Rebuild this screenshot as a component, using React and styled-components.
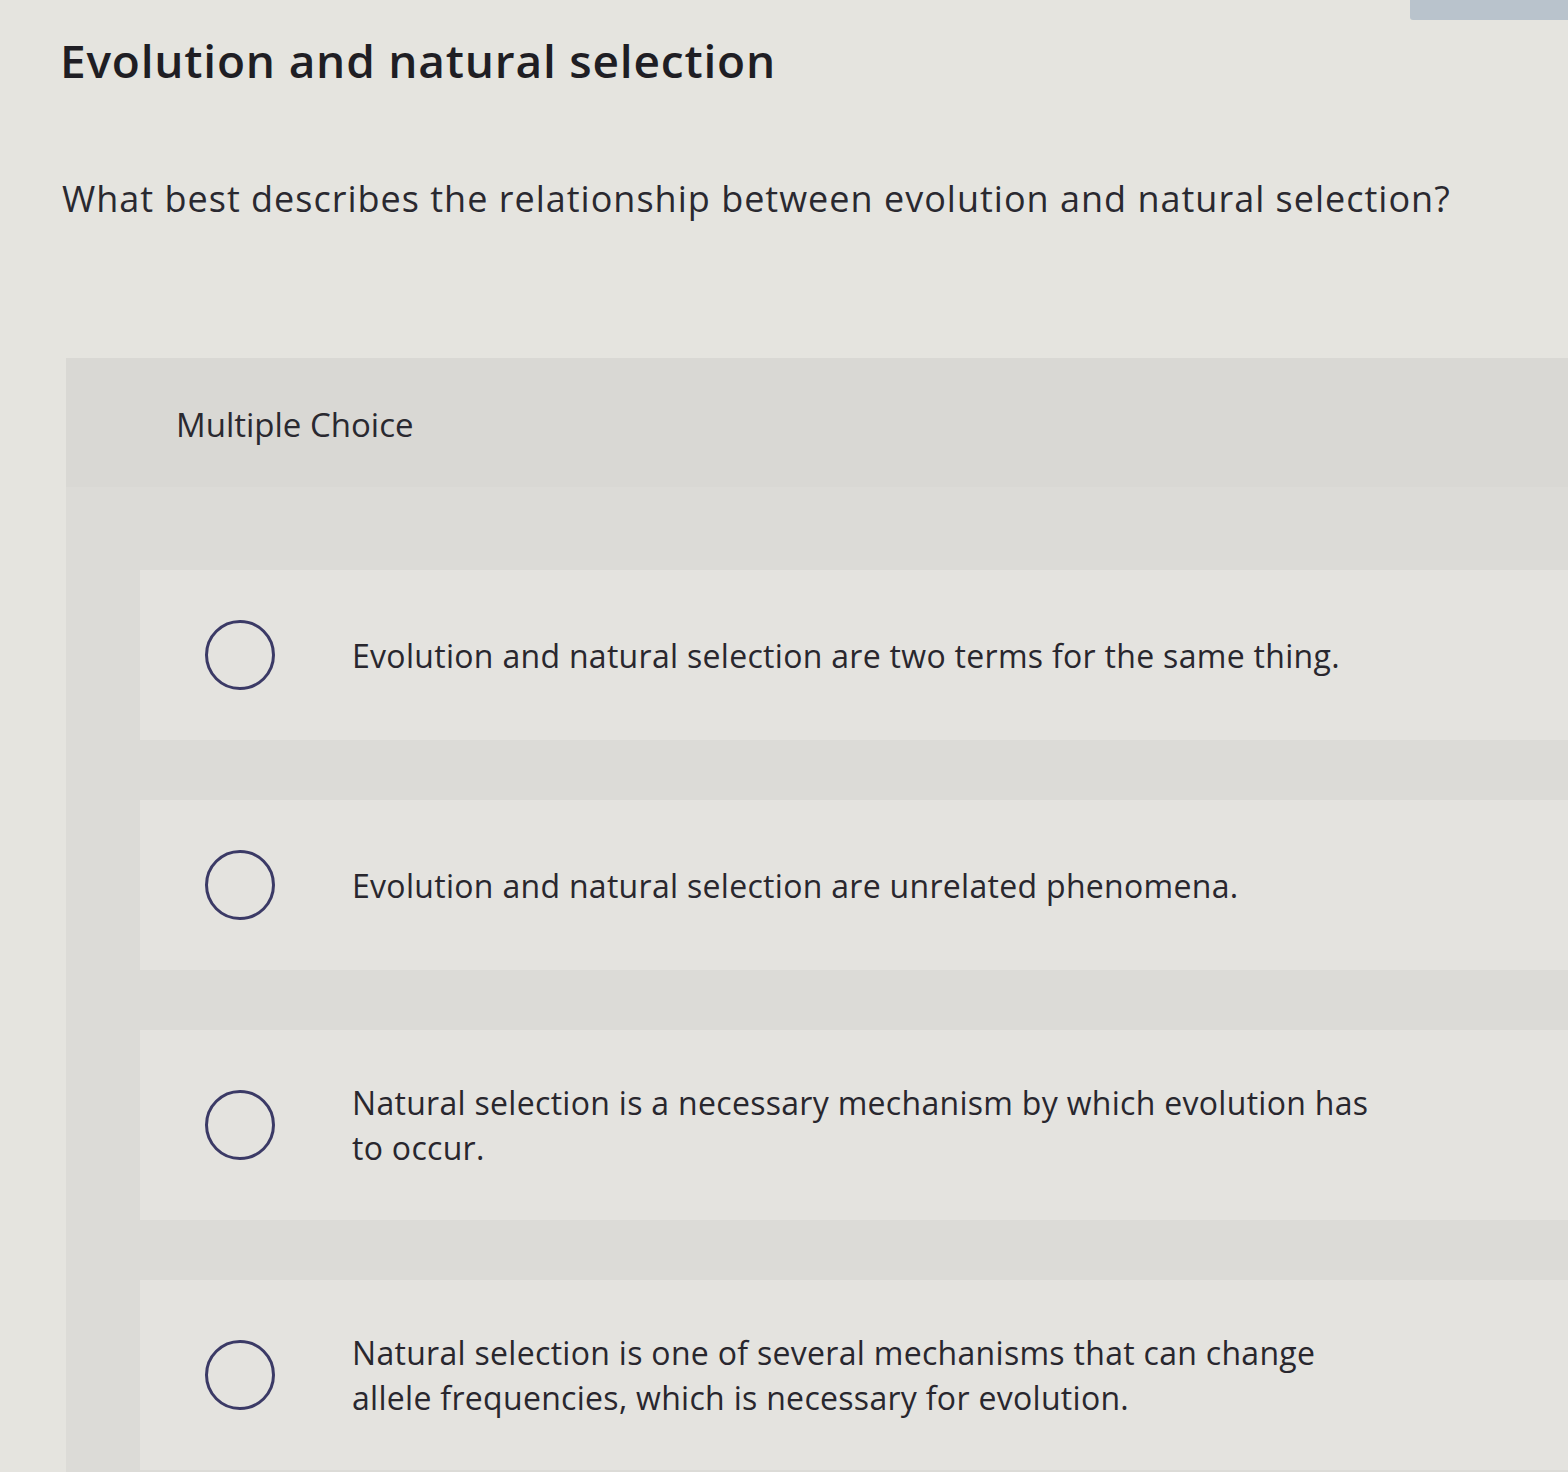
import React from "react";
import styled, { createGlobalStyle } from "styled-components";

const Global = createGlobalStyle`
  html, body { margin: 0; padding: 0; }
  body {
    background: #e5e4df;
    font-family: "Open Sans", Lato, Arial, sans-serif;
    color: #28272e;
    overflow-x: hidden;
  }
`;

const Page = styled.div`
  width: 1568px;
  min-height: 1472px;
  background: #e5e4df;
  overflow: hidden;
`;

const TopBar = styled.div`
  height: 20px;
  display: flex;
  justify-content: flex-end;
`;

const TopButton = styled.div`
  width: 158px;
  height: 20px;
  background: #b9c3cc;
  border-bottom-left-radius: 3px;
`;

const Title = styled.h1`
  margin: 13px 0 0 60px;
  font-size: 46px;
  line-height: 55px;
  font-weight: 600;
  letter-spacing: 0.8px;
  color: #1f1e24;
`;

const Question = styled.p`
  margin: 89px 0 0 62px;
  font-size: 36px;
  line-height: 43px;
  font-weight: 400;
  letter-spacing: 1px;
  color: #2a2930;
`;

const Panel = styled.section`
  margin: 138px 0 0 66px;
  background: #dedcd8;
`;

const PanelHeader = styled.div`
  padding: 46px 0 42px 110px;
  background: #d9d8d4;
  font-size: 33px;
  line-height: 41px;
  color: #2a2930;
`;

const OptionList = styled.div`
  display: flex;
  flex-direction: column;
  gap: 60px;
  padding: 83px 0 60px 74px;
  background: #dcdbd7;
`;

const OptionCard = styled.label`
  display: flex;
  align-items: center;
  min-height: 170px;
  box-sizing: border-box;
  padding: 50px 0 50px 65px;
  background: #e4e3df;
  cursor: pointer;
`;

const Radio = styled.span`
  flex: none;
  width: 70px;
  height: 70px;
  box-sizing: border-box;
  border: 3px solid #3b3a66;
  border-radius: 50%;
`;

const OptionText = styled.span`
  margin-left: 77px;
  max-width: 1030px;
  font-size: 32px;
  line-height: 45px;
  letter-spacing: 0.3px;
  color: #29272e;
`;

const options = [
  "Evolution and natural selection are two terms for the same thing.",
  "Evolution and natural selection are unrelated phenomena.",
  "Natural selection is a necessary mechanism by which evolution has to occur.",
  "Natural selection is one of several mechanisms that can change allele frequencies, which is necessary for evolution.",
];

export default function App() {
  return (
    <Page>
      <Global />
      <TopBar>
        <TopButton />
      </TopBar>
      <Title>Evolution and natural selection</Title>
      <Question>
        What best describes the relationship between evolution and natural selection?
      </Question>
      <Panel>
        <PanelHeader>Multiple Choice</PanelHeader>
        <OptionList>
          {options.map((o) => (
            <OptionCard key={o}>
              <Radio />
              <OptionText>{o}</OptionText>
            </OptionCard>
          ))}
        </OptionList>
      </Panel>
    </Page>
  );
}
